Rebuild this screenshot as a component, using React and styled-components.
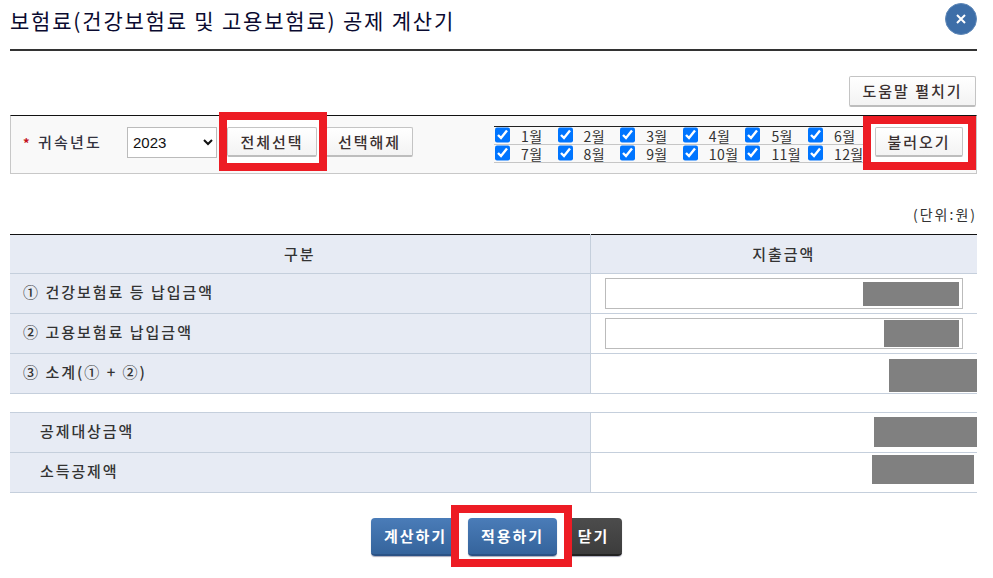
import React from "react";
import styled, { createGlobalStyle } from "styled-components";

const Global = createGlobalStyle`
  html, body { margin: 0; padding: 0; background: #fff; overflow: hidden; }
  * { box-sizing: border-box; }
  body { font-family: "Noto Sans CJK KR", "Liberation Sans", sans-serif; color: #333; }
`;
const Page = styled.div`
  width: 993px; height: 578px; padding: 0 16px 0 10px; overflow: hidden;
`;
const Header = styled.header`
  height: 51px; border-bottom: 2px solid #333; display: flex; justify-content: space-between; align-items: flex-start;
`;
const Title = styled.h1`
  margin: 6px 0 0; font-size: 21px; line-height: 29px; font-weight: 400; color: #0a0a30; letter-spacing: 1.8px; white-space: nowrap;
`;
const CloseButton = styled.button`
  width: 32px; height: 32px; margin-top: 3px; padding: 0; border: 1px solid #5f88b8; border-radius: 50%; background: #3d6ea8;
  display: flex; align-items: center; justify-content: center;
`;
const HelpRow = styled.div`
  margin-top: 25px; height: 31px; display: flex; justify-content: flex-end; padding-right: 1px;
`;
const GrayButton = styled.button`
  width: ${p => p.$w}px; height: ${p => p.$h || 30}px; padding: 0; position: relative; z-index: ${p => p.$z ?? 1};
  margin-left: ${p => p.$ml || 0}px;
  border: 1px solid #c4c4c4; border-bottom: 2px solid #bdbdbd; border-radius: 2px;
  background: linear-gradient(#ffffff, #f3f3f3); color: #3a3030;
  font-family: inherit; font-size: 15px; font-weight: 500; letter-spacing: 2px; line-height: 20px; white-space: nowrap;
`;
const FilterBar = styled.section`
  margin-top: 8px; height: 59px; background: #f9f9f9; border: 1px solid #c8c8c8; border-top: 1px solid #111;
  display: flex; align-items: flex-start; padding-top: 11px; position: relative;
`;
const Star = styled.span`
  color: #c4121b; font-size: 13px; font-weight: 700; margin: 8px 0 0 12px; width: 15px; line-height: 16px;
`;
const FieldLabel = styled.label`
  width: 89px; font-size: 15px; font-weight: 500; letter-spacing: 2.2px; line-height: 29px; color: #33333f; white-space: nowrap;
`;
const YearSelect = styled.select`
  width: 90px; height: 31px; margin: 0; background: #fff; border: 1px solid #bbb; border-radius: 0; color: #111;
  font-family: "Liberation Sans", Arial, sans-serif; font-size: 15px; padding-left: 1px;
`;
const Marked = styled.span`
  display: inline-flex; z-index: ${p => p.$z ?? 1}; margin-left: ${p => p.$ml || 0}px;
  position: ${p => (p.$float ? "absolute" : "relative")};
  ${p => p.$float && "right: 13px; top: 11px;"}
`;
const RedBox = styled.span`
  position: absolute; z-index: 0; background: #fff; border: 8px solid #ed1c24;
  top: ${p => p.$t}px; left: ${p => p.$l}px; right: ${p => p.$r}px; bottom: ${p => p.$b}px;
`;
const MonthGrid = styled.div`
  position: absolute; left: 483px; top: 11px; width: 376px;
  display: grid; grid-template-columns: repeat(6, 62.6px); grid-auto-rows: 18px;
`;
const MonthCell = styled.label`
  display: flex; align-items: flex-start; position: relative;
  border-bottom: 1px solid #c6c6c6;
  border-top: ${p => (p.$first ? "1px solid #222" : "0")};
  margin-top: ${p => (p.$first ? "-1px" : "0")}; height: ${p => (p.$first ? "19px" : "18px")};
  font-size: 14px; line-height: 17px; color: #333; font-weight: 400;
`;
const Check = styled.input`
  width: 15px; height: 16px; margin: 0 0 0 1px; accent-color: #0075ff; flex: none; position: relative;
`;
const MonthText = styled.span`
  margin: 1px 0 0 11px; letter-spacing: 0.4px; white-space: nowrap;
`;
const Unit = styled.div`
  margin-top: 32px; height: 28px; text-align: right; font-size: 14px; line-height: 16px; color: #333; letter-spacing: 2px;
`;
const Table = styled.table`
  width: 967px; table-layout: fixed; border-collapse: collapse;
  border-top: 1px solid ${p => p.$top || "#c5cfdc"}; margin-top: ${p => p.$mt || 0}px;
`;
const HeadCell = styled.th`
  height: 39px; padding: 0 0 2px; background: #e7ebf4; border-bottom: 1px solid #c5cfdc; border-left: ${p => (p.$split ? "1px solid #c5cfdc" : "0")};
  width: ${p => (p.$split ? "auto" : "580px")};
  font-size: 15px; font-weight: 500; letter-spacing: 2px; color: #333;
`;
const LabelCell = styled.td`
  height: 40px; padding: 0 0 4px ${p => p.$pad || 13}px; background: #e7ebf4; border-bottom: 1px solid #c5cfdc; width: 580px;
  font-size: 15px; font-weight: 500; letter-spacing: ${p => p.$ls ?? 2}px; color: #333; white-space: nowrap;
`;
const ValueCell = styled.td`
  height: 40px; padding: 0; border-bottom: 1px solid #c5cfdc; border-left: 1px solid #c5cfdc; background: #fff;
`;
const Field = styled.div`
  margin: 0 14px; height: 31px; border: 1px solid #bbb; background: #fff; display: flex; justify-content: flex-end; align-items: center; padding-right: 3px;
`;
const Plain = styled.div`
  height: 39px; display: flex; justify-content: flex-end; align-items: flex-start; padding: ${p => p.$t}px ${p => p.$r || 0}px 0 0;
`;
const Redacted = styled.div`
  width: ${p => p.$w}px; height: ${p => p.$h}px; background: #808080;
`;
const Actions = styled.div`
  margin-top: 25px; display: flex; justify-content: center; gap: 8px; padding-left: 6px;
`;
const ActionButton = styled.button`
  width: ${p => p.$w}px; height: 38px; padding: 0; position: relative; z-index: ${p => p.$z ?? 1}; border: 0; border-radius: 4px;
  border-bottom: 2px solid ${p => (p.$dark ? "#222" : "#2b5285")};
  box-shadow: 0 1px 1px #aab;
  background: ${p => (p.$dark ? "linear-gradient(#4c4c4c, #3c3c3c)" : "linear-gradient(#4a7cb8, #35649c)")};
  color: #fff; font-family: inherit; font-size: 15px; font-weight: 700; letter-spacing: 2px; line-height: 20px; white-space: nowrap;
`;

const months = [1, 2, 3, 4, 5, 6, 7, 8, 9, 10, 11, 12];

export default function App() {
  return (
    <Page>
      <Global />
      <Header>
        <Title>보험료(건강보험료 및 고용보험료) 공제 계산기</Title>
        <CloseButton aria-label="닫기">
          <svg width="10" height="10" viewBox="0 0 10 10"><path d="M1 1L9 9M9 1L1 9" stroke="#fff" strokeWidth="2" /></svg>
        </CloseButton>
      </Header>
      <HelpRow><GrayButton $w={127} $h={31}>도움말 펼치기</GrayButton></HelpRow>
      <FilterBar>
        <Star>*</Star>
        <FieldLabel>귀속년도</FieldLabel>
        <YearSelect defaultValue="2023"><option>2023</option></YearSelect>
        <Marked $ml={10}>
          <RedBox $t={-15} $l={-8} $r={-10} $b={-14} />
          <GrayButton $w={90}>전체선택</GrayButton>
        </Marked>
        <GrayButton $w={87} $ml={9} $z={0}>선택해제</GrayButton>
        <MonthGrid>
          {months.map(m => (
            <MonthCell key={m} $first={m <= 6}>
              <Check type="checkbox" defaultChecked />
              <MonthText>{m}월</MonthText>
            </MonthCell>
          ))}
        </MonthGrid>
        <Marked $float>
          <RedBox $t={-11} $l={-12} $r={-13} $b={-13} />
          <GrayButton $w={88}>불러오기</GrayButton>
        </Marked>
      </FilterBar>
      <Unit>(단위:원)</Unit>
      <Table $top="#111">
        <thead>
          <tr>
            <HeadCell>구분</HeadCell>
            <HeadCell $split>지출금액</HeadCell>
          </tr>
        </thead>
        <tbody>
          <tr>
            <LabelCell>① 건강보험료 등 납입금액</LabelCell>
            <ValueCell><Field><Redacted $w={96} $h={24} /></Field></ValueCell>
          </tr>
          <tr>
            <LabelCell>② 고용보험료 납입금액</LabelCell>
            <ValueCell><Field><Redacted $w={75} $h={27} /></Field></ValueCell>
          </tr>
          <tr>
            <LabelCell>③ 소계(① + ②)</LabelCell>
            <ValueCell><Plain $t={5}><Redacted $w={88} $h={33} /></Plain></ValueCell>
          </tr>
        </tbody>
      </Table>
      <Table $mt={18}>
        <tbody>
          <tr>
            <LabelCell $pad={30} $ls={1.9}>공제대상금액</LabelCell>
            <ValueCell><Plain $t={4}><Redacted $w={103} $h={30} /></Plain></ValueCell>
          </tr>
          <tr>
            <LabelCell $pad={30} $ls={1.9}>소득공제액</LabelCell>
            <ValueCell><Plain $t={2} $r={3}><Redacted $w={102} $h={29} /></Plain></ValueCell>
          </tr>
        </tbody>
      </Table>
      <Actions>
        <ActionButton $w={89} $z={0}>계산하기</ActionButton>
        <Marked>
          <RedBox $t={-13} $l={-17} $r={-15} $b={-11} />
          <ActionButton $w={89}>적용하기</ActionButton>
        </Marked>
        <ActionButton $w={57} $z={0} $dark>닫기</ActionButton>
      </Actions>
    </Page>
  );
}
